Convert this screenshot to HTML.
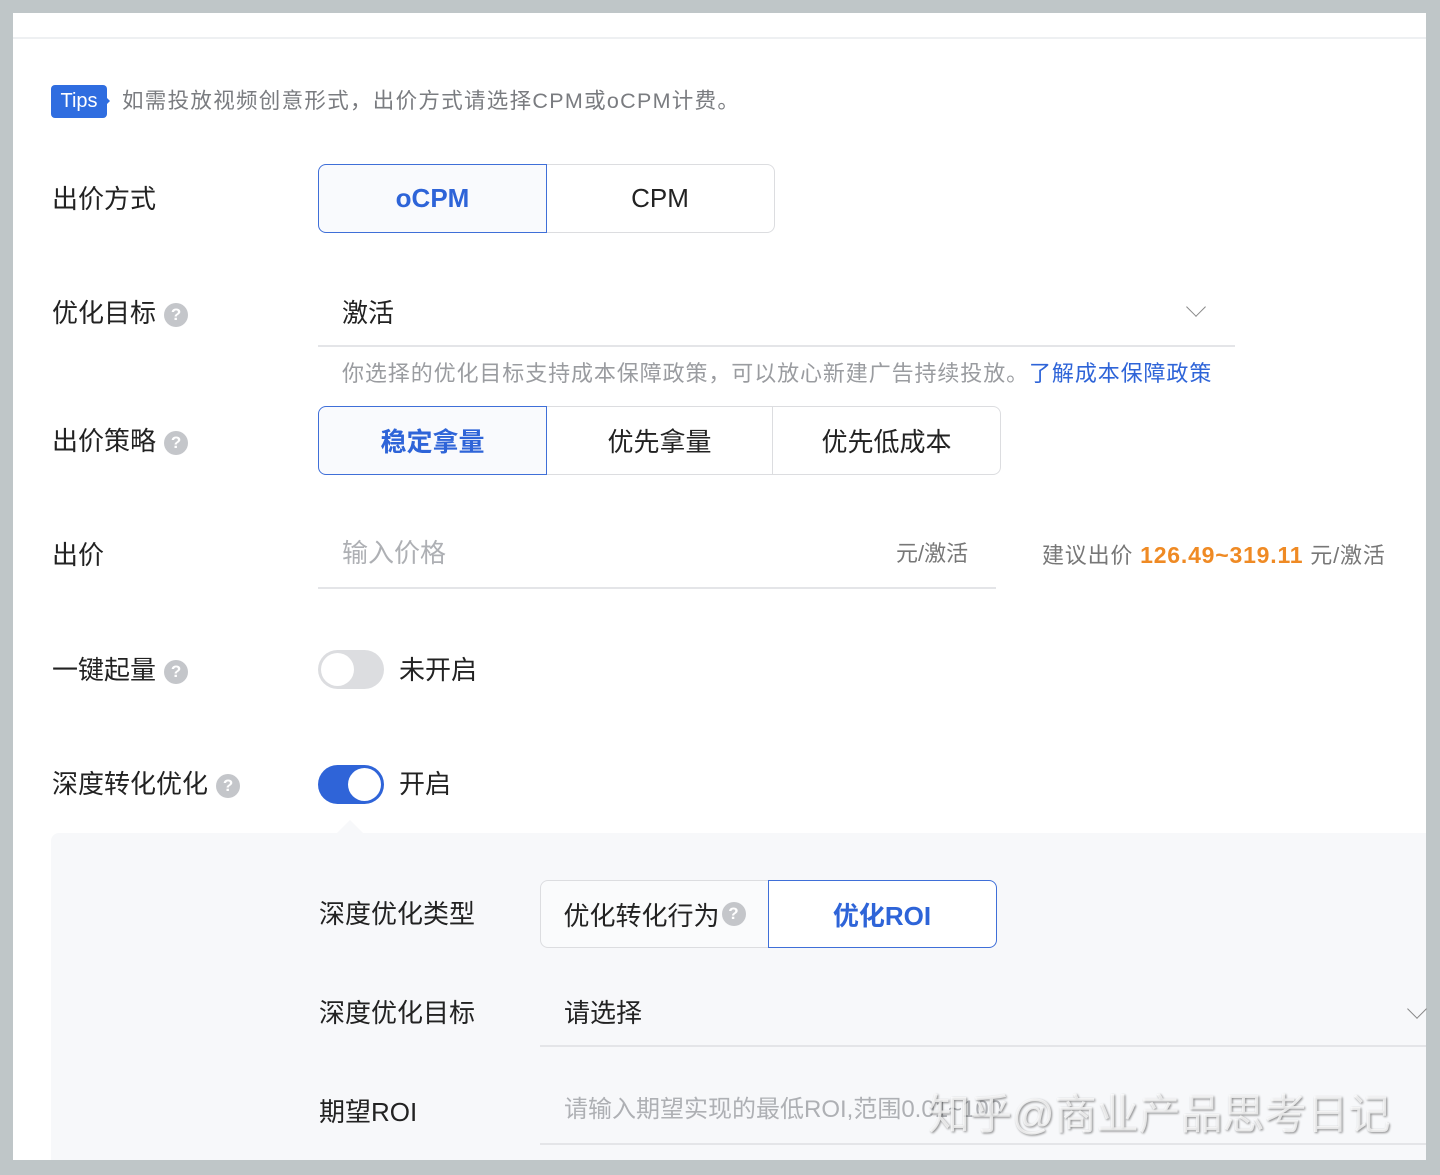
<!DOCTYPE html>
<html><head><meta charset="utf-8"><style>
*{margin:0;padding:0;box-sizing:border-box}
body{width:1440px;height:1175px;background:#bfc6c8;position:relative;overflow:hidden;font-family:"Liberation Sans","Noto Sans CJK SC",sans-serif;color:#222}
.panel{position:absolute;left:13px;top:13px;width:1413px;height:1147px;background:#fff}
.a{position:absolute;white-space:nowrap}
.lbl{font-size:26px;color:#222;line-height:30px}
.q{display:inline-block;width:24px;height:24px;border-radius:50%;background:#c4c6ca;color:#fff;font-size:17px;line-height:24px;text-align:center;font-weight:bold;vertical-align:2px;margin-left:8px;letter-spacing:0}
.seg{position:absolute;display:flex}
.seg div{display:flex;align-items:center;justify-content:center;font-size:26px;color:#222;border:1.5px solid #dcdde0;margin-left:-1.5px;background:#fff;position:relative}
.seg div:first-child{margin-left:0;border-radius:8px 0 0 8px}
.seg div:last-child{border-radius:0 8px 8px 0}
.seg .on{color:#2e64d8;font-weight:bold;background:#f9fafd;border-color:#3f6fd8;z-index:1}
.line{position:absolute;height:2px;background:#e4e5e8}
.chev{position:absolute;width:14px;height:14px;border-right:1.5px solid #888;border-bottom:1.5px solid #888;transform:rotate(45deg)}
</style></head><body>
<div class="panel"></div>
<div class="a" style="left:13px;top:37px;width:1413px;height:2px;background:#eef0f2"></div>

<div class="a" style="left:51px;top:85px;width:56px;height:33px;background:#2f6de0;border-radius:4px;color:#fff;font-size:20px;line-height:33px;text-align:center">Tips</div>
<div class="a" style="left:105px;top:96px;width:0;height:0;border-top:5px solid transparent;border-bottom:5px solid transparent;border-left:5px solid #2f6de0"></div>
<div class="a" style="left:122px;top:87px;font-size:21.5px;letter-spacing:1.3px;color:#7a7c80;line-height:28px">如需投放视频创意形式，出价方式请选择CPM或oCPM计费。</div>

<div class="a lbl" style="left:52px;top:184px">出价方式</div>
<div class="seg" style="left:318px;top:164px;height:69px"><div class="on" style="width:229px">oCPM</div><div style="width:229px">CPM</div></div>

<div class="a lbl" style="left:52px;top:298px">优化目标<span class="q">?</span></div>
<div class="a lbl" style="left:342px;top:298px">激活</div>
<div class="chev" style="left:1189px;top:300px"></div>
<div class="line" style="left:318px;top:345px;width:917px"></div>
<div class="a" style="left:342px;top:360px;font-size:22px;letter-spacing:0.9px;color:#9a9ca0;line-height:28px">你选择的优化目标支持成本保障政策，可以放心新建广告持续投放。<span style="color:#2e64d8">了解成本保障政策</span></div>

<div class="a lbl" style="left:52px;top:426px">出价策略<span class="q">?</span></div>
<div class="seg" style="left:318px;top:406px;height:69px"><div class="on" style="width:229px">稳定拿量</div><div style="width:228px">优先拿量</div><div style="width:229px">优先低成本</div></div>

<div class="a lbl" style="left:52px;top:540px">出价</div>
<div class="a" style="left:342px;top:538px;font-size:26px;color:#aeb0b4;line-height:30px">输入价格</div>
<div class="a" style="left:896px;top:540px;font-size:22px;color:#777;line-height:28px">元/激活</div>
<div class="line" style="left:318px;top:587px;width:678px"></div>
<div class="a" style="left:1042px;top:541px;font-size:22px;letter-spacing:0.8px;color:#777;line-height:28px">建议出价 <b style="color:#ef8a24;font-size:23px">126.49~319.11</b> 元/激活</div>

<div class="a lbl" style="left:52px;top:655px">一键起量<span class="q">?</span></div>
<div class="a" style="left:318px;top:650px;width:66px;height:39px;border-radius:20px;background:#dcdde0"></div>
<div class="a" style="left:321px;top:653px;width:33px;height:33px;border-radius:50%;background:#fff"></div>
<div class="a lbl" style="left:399px;top:655px">未开启</div>

<div class="a lbl" style="left:52px;top:769px">深度转化优化<span class="q">?</span></div>
<div class="a" style="left:318px;top:765px;width:66px;height:39px;border-radius:20px;background:#2f64d8"></div>
<div class="a" style="left:348px;top:768px;width:33px;height:33px;border-radius:50%;background:#fff"></div>
<div class="a lbl" style="left:399px;top:769px">开启</div>

<div class="a" style="left:51px;top:833px;width:1375px;height:327px;background:#f7f8fa;border-radius:8px 0 0 0"></div>
<div class="a" style="left:337px;top:820px;width:0;height:0;border-left:13px solid transparent;border-right:13px solid transparent;border-bottom:13px solid #f7f8fa"></div>

<div class="a lbl" style="left:319px;top:899px">深度优化类型</div>
<div class="seg" style="left:540px;top:880px;height:68px"><div style="width:229px;background:#fafbfc">优化转化行为<span class="q" style="margin-left:2px">?</span></div><div class="on" style="width:229px;background:#fff">优化ROI</div></div>

<div class="a lbl" style="left:319px;top:998px">深度优化目标</div>
<div class="a lbl" style="left:564px;top:998px">请选择</div>
<div class="chev" style="left:1410px;top:1002px"></div>
<div class="line" style="left:540px;top:1045px;width:886px"></div>

<div class="a lbl" style="left:319px;top:1097px">期望ROI</div>
<div class="a" style="left:564px;top:1095px;font-size:24px;color:#aeb0b4;line-height:30px">请输入期望实现的最低ROI,范围0.01~100</div>
<div class="line" style="left:540px;top:1143px;width:886px"></div>
<div class="a" style="left:928px;top:1090px;font-size:42px;color:rgba(255,255,255,0.75);line-height:50px;text-shadow:1px 1px 2px rgba(0,0,0,0.45)">知乎@商业产品思考日记</div>
</body></html>
